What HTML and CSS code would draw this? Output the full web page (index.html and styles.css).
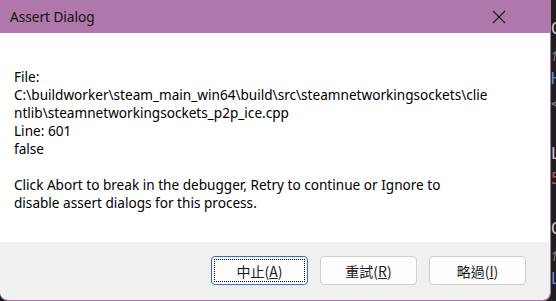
FILE: index.html
```html
<!DOCTYPE html>
<html>
<head>
    <meta charset="UTF-8">
    <title>Assert Dialog</title>
    <link rel="stylesheet" href="styles.css">
</head>

<body>
    <div class="screen">
        <!-- 对话框 -->
        <div class="dialog">
            <div class="titlebar">
                <span class="title">Assert Dialog</span>
                <svg class="close-icon" width="14" height="14" viewBox="0 0 14 14">
                    <path d="M1 1 L13 13 M13 1 L1 13" stroke="#1a1a1a" stroke-width="1.1" fill="none"/>
                </svg>
            </div>
            <div class="content">
                <p class="message">File:<br>C:\buildworker\steam_main_win64\build\src\steamnetworkingsockets\clie<br>ntlib\steamnetworkingsockets_p2p_ice.cpp<br>Line: 601<br>false<br><br>Click Abort to break in the debugger, Retry to continue or Ignore to<br>disable assert dialogs for this process.</p>
            </div>
            <div class="footer">
                <button class="dlg-button focused"><span class="focus-rect">中止(<u>A</u>)</span></button>
                <button class="dlg-button"><span class="focus-rect">重試(<u>R</u>)</span></button>
                <button class="dlg-button"><span class="focus-rect">略過(<u>I</u>)</span></button>
            </div>
        </div>
        <!-- 背后的编辑器 -->
        <div class="backdrop">
            <span class="frag white">C</span>
            <span class="frag gray">作</span>
            <span class="frag blue">H</span>
            <span class="frag gray">&lt;</span>
            <span class="frag"></span>
            <span class="frag white">L</span>
            <span class="frag red">5</span>
            <span class="frag"></span>
            <span class="frag white">C</span>
            <span class="frag gray">作</span>
            <span class="frag blue">L</span>
        </div>
    </div>
</body>
</html>
```

FILE: styles.css
```css
body {
    margin: 0;
    background-color: #1E1E1E;
    font-family: "Noto Sans", "Noto Sans CJK TC", sans-serif;
}
.screen {
    display: flex;
    height: 301px;
    overflow: hidden;
}
/* 对话框 */
.dialog {
    width: 550px;
    flex-shrink: 0;
    display: flex;
    flex-direction: column;
    border-right: 1px solid #B077AB;
    border-bottom: 1px solid #B077AB;
    border-bottom-left-radius: 8px;
    border-bottom-right-radius: 8px;
    overflow: hidden;
}
.titlebar {
    height: 33px;
    background-color: #B077AB;
    display: flex;
    align-items: center;
    justify-content: space-between;
    padding: 0 44px 0 10px;
}
.title {
    font-size: 13.6px;
    color: #111;
}
.close-icon {
    display: block;
}
.content {
    height: 209px;
    background-color: #FFFFFF;
    padding: 35px 14px 0;
    box-sizing: border-box;
}
.message {
    margin: 0;
    font-size: 13.6px;
    line-height: 18px;
    color: #000;
}
.footer {
    flex: 1;
    background-color: #F0F0F0;
    display: flex;
    justify-content: flex-end;
    align-items: flex-start;
    gap: 12px;
    padding: 14px 24px 0 0;
}
.dlg-button {
    width: 97px;
    height: 29px;
    background-color: #FDFDFD;
    border: 1px solid #D0D0D0;
    border-radius: 4px;
    padding: 2px;
    font-family: "Noto Sans CJK TC", sans-serif;
    font-size: 14px;
    color: #1A1A1A;
    display: flex;
    box-sizing: border-box;
}
.focus-rect {
    flex: 1;
    display: flex;
    align-items: center;
    justify-content: center;
    border: 1px dotted transparent;
}
.dlg-button.focused {
    border-color: #2F6FD0;
}
.dlg-button.focused .focus-rect {
    border-color: #000;
}
/* 背后的编辑器 */
.backdrop {
    flex: 1;
    display: flex;
    flex-direction: column;
    padding-top: 17px;
    font-family: "DejaVu Sans Mono", monospace;
    font-size: 15px;
    line-height: 25px;
    white-space: nowrap;
}
.frag {
    height: 25px;
}
.frag.white { color: #D4D4D4; }
.frag.gray { color: #808080; font-style: italic; }
.frag.blue { color: #569CD6; }
.frag.red { color: #D05050; }
```
